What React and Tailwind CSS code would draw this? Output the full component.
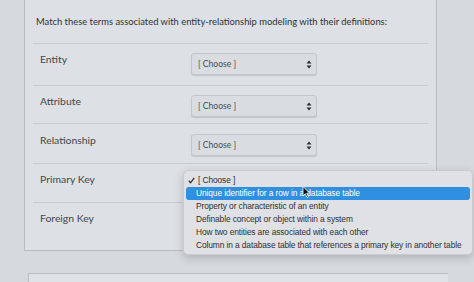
import React from 'react';

const rows = [
  { label: 'Entity', h: 'h-[42px]', pt: 'pt-[8px]' },
  { label: 'Attribute', h: 'h-[38px]', pt: 'pt-[8px]' },
  { label: 'Relationship', h: 'h-[40px]', pt: 'pt-[9px]' },
  { label: 'Primary Key', h: 'h-[39px]', pt: 'pt-[8px]', open: true },
  { label: 'Foreign Key', h: 'h-[49px]', pt: 'pt-[8px]', hideSelect: true },
];

const options = [
  'Unique identifier for a row in a database table',
  'Property or characteristic of an entity',
  'Definable concept or object within a system',
  'How two entities are associated with each other',
  'Column in a database table that references a primary key in another table',
];

function SelectBox() {
  return (
    <div className="mt-[1px] w-[126px] h-[22px] rounded-[3px] border border-[#c3c6ca] bg-[#d9dce0] shadow-[0_1px_1px_rgba(0,0,0,0.12)] flex items-center justify-between pl-[6px] pr-[4px]">
      <span className="text-[8.6px] text-[#4a4d52]">[ Choose ]</span>
      <svg width="6" height="9" viewBox="0 0 6 9">
        <path d="M3 0.5 L5.5 3.5 L0.5 3.5 Z" fill="#2b2d31" />
        <path d="M3 8.5 L5.5 5.5 L0.5 5.5 Z" fill="#2b2d31" />
      </svg>
    </div>
  );
}

function Dropdown() {
  return (
    <div className="absolute left-[150px] top-[6px] w-[290px] rounded-[5px] bg-[#dfe1e4] border border-[#c9cbcf] shadow-[0_3px_10px_rgba(0,0,0,0.18)] py-[2px] px-[2px] text-[8.4px] tracking-[-0.1px] text-[#2e3034] font-['Liberation_Sans',sans-serif] whitespace-nowrap z-10">
      <div className="h-[14px] flex items-center pl-[2px]">
        <svg className="mr-[3px]" width="7" height="7" viewBox="0 0 7 7">
          <path d="M0.8 3.8 L2.6 5.8 L6.2 0.9" fill="none" stroke="#2e3034" strokeWidth="1.3" />
        </svg>
        <span>[ Choose ]</span>
      </div>
      {options.map((o, i) => (
        <div
          key={o}
          className={
            i === 0
              ? 'relative h-[13px] flex items-center pl-[10px] rounded-[3px] bg-[#2f8fe0] text-white'
              : 'h-[13px] flex items-center pl-[10px]'
          }
        >
          {o}
          {i === 0 && (
            <svg className="absolute left-[116px] top-[-1px]" width="8" height="12" viewBox="0 0 8 12">
              <path d="M1 0.5 L1 10 L3.3 7.8 L5 11.5 L6.4 10.8 L4.7 7.2 L7.6 7.2 Z" fill="#111" stroke="#fff" strokeWidth="0.8" />
            </svg>
          )}
        </div>
      ))}
    </div>
  );
}

export default function App() {
  return (
    <div className="w-[474px] h-[282px] overflow-hidden bg-[#d6d9dd] font-['Lato',sans-serif]">
      <div className="ml-[24px] w-[413px] h-[251px] border-x border-b border-[#b9bcc0] bg-[#dde0e4]">
        <div className="h-[43px] pl-[11px] pt-[15px] text-[9.4px] text-[#2f3237]">
          Match these terms associated with entity-relationship modeling with their definitions:
        </div>
        <div className="mx-[8px]">
          {rows.map((r) => (
            <div key={r.label} className={`relative flex border-t border-[#c8cbcf] ${r.h} ${r.pt}`}>
              <div className="w-[158px] pl-[7px] text-[10.4px] leading-[14px] text-[#44474c]">{r.label}</div>
              {!r.open && !r.hideSelect && <SelectBox />}
              {r.open && <Dropdown />}
            </div>
          ))}
        </div>
      </div>
      <div className="mt-[22px] ml-[28px] w-[420px] h-[20px] border-t border-l border-[#b9bcc0] bg-[#dfe2e6]" />
    </div>
  );
}
